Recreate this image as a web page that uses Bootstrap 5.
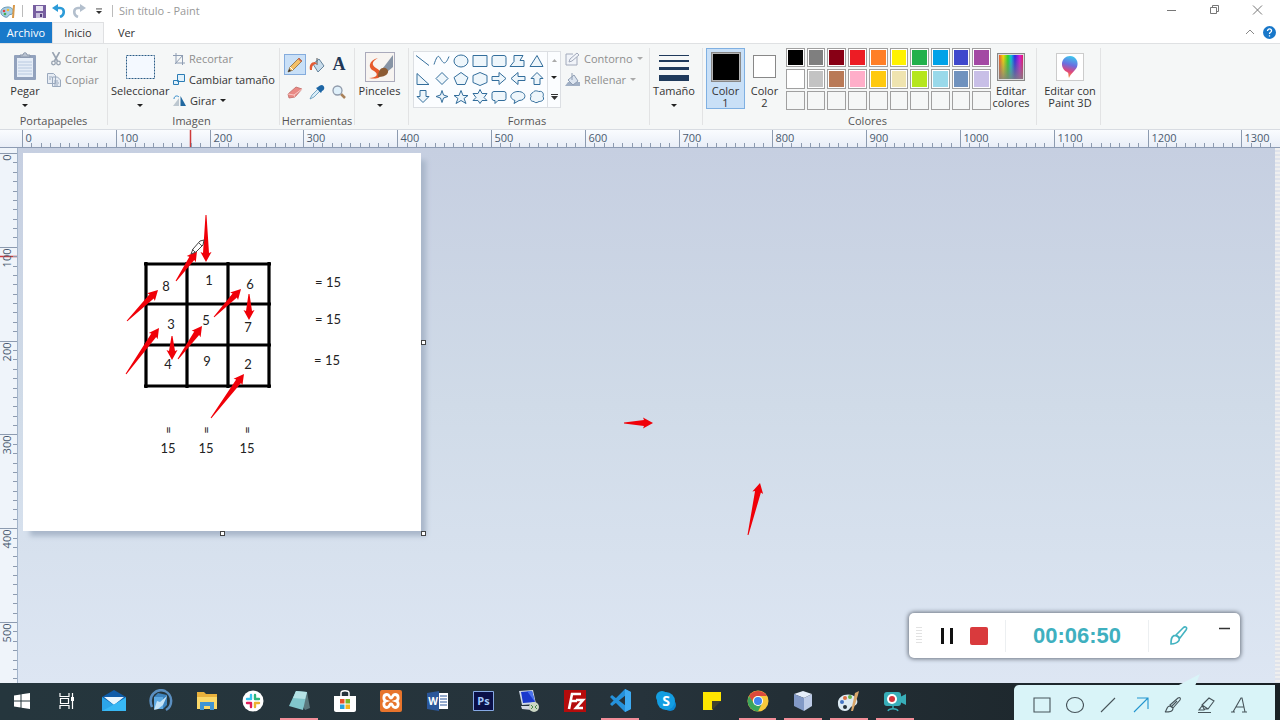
<!DOCTYPE html>
<html lang="es">
<head>
<meta charset="utf-8">
<meta name="viewport" content="width=device-width, initial-scale=1">
<title>Sin título - Paint</title>
<link href="https://cdn.jsdelivr.net/npm/bootstrap@5.3.0/dist/css/bootstrap.min.css" rel="stylesheet">
<style>
body{font-family:"Open Sans","Noto Sans",sans-serif;font-size:11px;line-height:12px;color:#333;background:#fff;}
svg{display:block;flex:none}
button.btn{--bs-btn-font-size:11px;--bs-btn-line-height:12px;--bs-btn-padding-x:0;--bs-btn-padding-y:0;--bs-btn-border-width:0;--bs-btn-border-radius:0;--bs-btn-color:#333}
.titlebar{height:22px;padding-right:15px}
.quick{gap:6px}
.vsep{width:1px;height:12px;background:#bbb}
.doc-title{color:#999}
.win-btns{gap:28px}
.win-btns .line-art{stroke:#777;stroke-width:1}
.tabs-row{height:22px}
.tabs-row .nav-link{padding:0;width:52px;height:22px;line-height:22px;text-align:center;color:#333;font-size:11px;border-radius:0}
.tabs-row .ver-tab{width:45px}
.tabs-row .file-tab{background:#1979ca;color:#fff}
.tabs-row .active{background:#f5f6f7;border:1px solid #dfe0e2;border-bottom:0;line-height:20px}
.ribbon{background:#f5f7f7;border-top:1px solid #dfe1e3;border-bottom:1px solid #d8dce2;height:87px;padding:4px 0;margin-top:-1px}
.group{border-right:1px solid #e2e3e4}
.group-body{height:66px}
.group-name{line-height:14px;text-align:center;color:#555}
.big{width:44px;height:61px}
.big .pic{height:36px;display:flex;align-items:center;justify-content:center}
.big.wide{width:58px}
.row-btn{height:21px;gap:4px}
button.dim.btn{--bs-btn-color:#8e8e8e}
.caret{width:0;height:0;border:3px solid transparent;border-top-color:#222;border-bottom:0}
.dim .caret{border-top-color:#aaa}
.tools{display:grid;grid-template-columns:repeat(3,22px);grid-auto-rows:21px;row-gap:6px;padding:6px 0 0 4px}
.tools .btn,.pal button{display:flex;align-items:center;justify-content:center}
.tools .picked{background:#c9e0f7;outline:1px solid #84acdd;outline-offset:-1px}
.gallery{border:1px solid #dcdfe3;background:#fbfdff;height:57px;margin:3px 0 0 4px}
.shapes{display:grid;grid-template-columns:repeat(7,19px);grid-auto-rows:18px}
.shapes svg{fill:#eef6fb;stroke:#336e9c;stroke-width:1}
.scroller{width:13px;border-left:1px solid #dcdfe3}
.brush-box{width:30px;height:30px;border:1px solid #aab;background:#f7f4f1}
.chosen{background:#c9e0f7;outline:1px solid #7fb0e2;outline-offset:-1px}
.c1{width:30px;height:30px;background:#000;border:1px solid #888;box-shadow:inset 0 0 0 1px #b5b5b5}
.c2{width:23px;height:23px;background:#fff;border:1px solid #888}
.pal{display:grid;grid-template-columns:repeat(10,1fr);grid-template-rows:repeat(3,1fr);gap:2px;width:205px;height:62px;margin-left:2px}
.pal button{border:1px solid #a0a0a0;background:transparent;padding:0}
.pal button span{display:block;width:100%;height:100%;border:1px solid #fff}
.spectrum{width:28px;height:28px;border:1px solid #888;box-shadow:inset 0 0 0 1px #ddd;background:linear-gradient(180deg,rgba(128,128,128,0),rgba(128,128,128,.9)),linear-gradient(90deg,#e33,#fd0 20%,#2d2 38%,#0cd 50%,#22e 65%,#d1d 84%,#e13)}
.p3d{width:28px;height:28px;border:1px solid #ccc;background:#fff}
.ruler-top{height:18px;background:linear-gradient(#fafcff,#e9eef7);border-bottom:1px solid #8d9bb3}
.ruler-left{width:18px;background:#eff4fa;border-right:1px solid #a3b4ca}
.ruler text{font-family:"Open Sans","Noto Sans",sans-serif;font-size:11px;fill:#4b5b70}
.work{background:linear-gradient(#c6cfe1,#d0dbe8 48%,#dde6f3);padding:5px;overflow:hidden}
.edge{width:5px;background:repeating-linear-gradient(#efefef 0 2px,#dfe3ec 2px 4px)}
.sheet{width:398px;height:378px;background:#fff;box-shadow:6px 6px 5px -1px #a9b7ca}
.sheet text{font-family:Lato,"Open Sans",sans-serif;font-size:13px;fill:#222}
.sheet text.turned{font-size:13px}
.knob{width:5px;height:5px;background:#fff;border:1px solid #444}
.kr{left:398px;top:187px}.kb{left:197px;top:378px}.kc{left:398px;top:378px}
.notes{left:0;top:0;width:100%;height:100%;pointer-events:none;fill:#f00008}
.taskbar{height:37px;background:linear-gradient(90deg,#25363d,#26333b 50%,#192125)}
.taskbar .btn{width:46px;height:37px;padding-bottom:2px;display:flex;align-items:center;justify-content:center;position:relative;flex:none}
.taskbar .first{width:44px}
.taskbar .open::after{content:"";position:absolute;left:4px;right:4px;bottom:0;height:2px;background:#f28d98}
.recorder{right:40px;bottom:62px;width:331px;height:45px;background:#fff;border-radius:5px;box-shadow:0 0 4px 1px #6c7480}
.grip{width:6px;height:18px;background:repeating-linear-gradient(#e2e2e2 0 1px,transparent 1px 3px);margin-left:7px}
.clock{font:bold 22px "Liberation Sans",Arial,sans-serif;color:#3fb0bf;width:144px;text-align:center;border:solid #eceff1;border-width:0 1px;line-height:32px}
.inkbar{right:5px;bottom:0;height:35px;width:261px;background:#d9f4f8;border-radius:5px 0 0 0;padding:5px 20px 0 12px}
.inkbar .tip{right:75px;top:-11px}
.inkbar .btn{width:33px;display:flex;justify-content:center;align-items:center}
.inkbar .btn svg,.line-art{fill:none;stroke:#47545a;stroke-width:1.1}
</style>
</head>
<body class="vh-100 d-flex flex-column overflow-hidden position-relative">
<header>
 <div class="titlebar d-flex align-items-center justify-content-between">
  <div class="quick d-flex align-items-center">
   <svg width="16" height="16" viewBox="0 0 16 16"><path d="M1 10C0 6 4 4 8 4c4 0 6 3 5 6-1 2-3 1-4 2s-1 3-4 2c-2-1-4-2-4-4z" fill="#a9cfe4" stroke="#6797b4"/><circle cx="4" cy="8" r="1.3" fill="#d44"/><circle cx="8" cy="7" r="1.3" fill="#eb3"/><circle cx="5" cy="11" r="1.3" fill="#4a5"/><path d="M12 15l1-13h2l-1 13z" fill="#d8994a"/></svg>
   <span class="vsep"></span>
   <button class="btn ms-1" aria-label="Guardar"><svg width="13" height="13" viewBox="0 0 13 13"><path d="M0 0h13v13H0z" fill="#775fa0"/><path d="M3 1h7v5H3z" fill="#e7e3f1"/><path d="M3 8h7v5H3z" fill="#c8bfdc"/><path d="M7 9h2v3H7z" fill="#54407c"/></svg></button>
   <button class="btn" aria-label="Deshacer"><svg width="14" height="14" viewBox="0 0 14 14"><path d="M3 4h5c5 0 5 7 0 9" fill="none" stroke="#2c9bd8" stroke-width="2.6"/><path d="M6 0v8L0 4z" fill="#2c9bd8"/></svg></button>
   <button class="btn" aria-label="Rehacer"><svg width="14" height="14" viewBox="0 0 14 14"><path d="M11 4H6c-5 0-5 7 0 9" fill="none" stroke="#b3bfcd" stroke-width="2.6"/><path d="M8 0v8l6-4z" fill="#b3bfcd"/></svg></button>
   <button class="btn mx-1" aria-label="Personalizar"><svg width="6" height="7" viewBox="0 0 7 7"><path d="M0 .5h7" stroke="#333"/><path d="M0 3h7L3.500 6.500z" fill="#333"/></svg></button>
   <span class="vsep"></span><span class="doc-title">Sin título - Paint</span>
  </div>
  <div class="win-btns d-flex">
   <button class="btn" aria-label="Minimizar"><svg class="line-art" width="15" height="14" viewBox="0 0 15 14"><path d="M3 6.500h9"/></svg></button>
   <button class="btn" aria-label="Restaurar"><svg class="line-art" width="15" height="14" viewBox="0 0 15 14"><path d="M3.500 3.500h6v6h-6zM5.500 3.500v-2h6v6h-2"/></svg></button>
   <button class="btn" aria-label="Cerrar"><svg class="line-art" width="15" height="14" viewBox="0 0 15 14"><path d="M3 1.500l9 9M12 1.500l-9 9"/></svg></button>
  </div>
 </div>
 <div class="tabs-row d-flex justify-content-between">
  <nav class="nav"><a class="nav-link file-tab" href="#">Archivo</a><a class="nav-link active" href="#">Inicio</a><a class="nav-link ver-tab" href="#">Ver</a></nav>
  <div class="d-flex align-items-center gap-2 pe-1">
   <button class="btn" aria-label="Contraer"><svg width="10" height="9" viewBox="0 0 10 9"><path d="M1 5l4-4 4 4" fill="none" stroke="#888"/></svg></button>
   <button class="btn" aria-label="Ayuda"><svg width="13" height="15" viewBox="0 0 13 15"><circle cx="6.500" cy="6.500" r="6.500" fill="#1877c9"/><path d="M4.500 5c0-3 4.300-2.500 4 0-.2 1.400-2 1.300-2 3M6.500 9.200v1.300" fill="none" stroke="#fff" stroke-width="1.300"/></svg></button>
  </div>
 </div>
</header>
<div class="ribbon d-flex">
 <section class="group" style="width:108px">
  <div class="group-body d-flex gap-1" style="padding-left:3px">
   <button class="btn big"><span class="pic"><svg width="24" height="29" viewBox="0 0 24 29"><rect x="1" y="3" width="22" height="25" rx="1" fill="#92a2bd"/><path d="M4 6h16v19H4z" fill="#e5edf7"/><path d="M7 5V3h3c0-3 4-3 4 0h3v2z" fill="#b9c3d1" stroke="#8794a8"/><path d="M5 10h14M5 13h14M5 16h14M5 19h14M5 22h14" stroke="#b8c9e0"/></svg></span><span class="d-block">Pegar</span><span class="caret d-inline-block"></span></button>
   <div>
    <button class="btn row-btn dim d-flex align-items-center"><svg width="10" height="14" viewBox="0 0 10 14"><path d="M1.500 0l5 9M8.500 0l-5 9" stroke="#98a3b1" stroke-width="1.600"/><circle cx="2.500" cy="11" r="1.800" fill="none" stroke="#98a3b1" stroke-width="1.300"/><circle cx="7.500" cy="11" r="1.800" fill="none" stroke="#98a3b1" stroke-width="1.300"/></svg>Cortar</button>
    <button class="btn row-btn dim d-flex align-items-center" style="margin-left:-4px"><svg width="14" height="14" viewBox="0 0 14 14"><path d="M.5.5h6l2 2v8h-8zM5.500 4h5l3 3v6.500h-8z" fill="#e6ecf4" stroke="#9aa9bd"/><path d="M2 4h3M2 6h2M7 8h4M7 10h5M7 12h4" stroke="#9aa9bd"/></svg>Copiar</button>
   </div>
  </div>
  <div class="group-name">Portapapeles</div>
 </section>
 <section class="group" style="width:172px">
  <div class="group-body d-flex gap-1" style="padding-left:3px">
   <button class="btn big wide"><span class="pic"><svg width="29" height="24" viewBox="0 0 29 24"><path d="M.5.5h28v23H.5z" fill="#f4f9ff" stroke="#2b5d87" stroke-dasharray="2 1"/></svg></span><span class="d-block">Seleccionar</span><span class="caret d-inline-block"></span></button>
   <div>
    <button class="btn row-btn dim d-flex align-items-center"><svg width="12" height="12" viewBox="0 0 12 12"><path d="M3 0v10h9M0 2.500h9.500V12M2 11l8-9" fill="none" stroke="#8e9db3"/></svg>Recortar</button>
    <button class="btn row-btn d-flex align-items-center"><svg width="12" height="12" viewBox="0 0 12 12"><path d="M4.500.5h7v7h-7zM.5 6.500h5v4h-5z" fill="#e1f1fb" stroke="#2a7cb5"/></svg>Cambiar tamaño</button>
    <button class="btn row-btn d-flex align-items-center"><svg width="13" height="12" viewBox="0 0 13 12"><path d="M6 3v8H0z" fill="#bcc7d0"/><path d="M7.500 1v10H13z" fill="#2068a0"/><path d="M1 4c0-3 3-4 5-2" fill="none" stroke="#338bca"/></svg>Girar<span class="caret"></span></button>
   </div>
  </div>
  <div class="group-name" style="padding-right:4px">Imagen</div>
 </section>
 <section class="group" style="width:75px">
  <div class="group-body"><div class="tools">
   <button class="btn picked" aria-label="Lápiz"><svg width="16" height="16" viewBox="0 0 16 16"><path d="M1 15l2-5 9-9 3 3-9 9z" fill="#f4c168" stroke="#8a6b3e" stroke-width=".8"/><path d="M11 2l3 3 1-1-3-3z" fill="#cf6457"/><path d="M1 15l1.300-3L4 14z" fill="#333"/><path d="M3 10l3 3" stroke="#fff"/></svg></button>
   <button class="btn" aria-label="Relleno"><svg width="16" height="16" viewBox="0 0 16 16"><path d="M4 7l6-5 5 7-6 6z" fill="#c8dceb" stroke="#64839c"/><path d="M8 8V1" stroke="#555"/><path d="M1 13c-1-5 1-8 5-8l2 2c-4 0-5 2-5 6z" fill="#e35a34"/></svg></button>
   <button class="btn fw-bold" aria-label="Texto" style="font:bold 18px 'Liberation Serif',serif;color:#1f3857">A</button>
   <button class="btn" aria-label="Borrador"><svg width="16" height="14" viewBox="0 0 16 14"><path d="M1 9l8-7 6 2-7 8-6 1z" fill="#e98984" stroke="#bf6a66" stroke-width=".8"/><path d="M1 9l6 1 8-6M7 10l1 2" stroke="#f9c9c5" fill="none"/></svg></button>
   <button class="btn" aria-label="Selector de color"><svg width="16" height="16" viewBox="0 0 16 16"><path d="M1 15l2-4 6-6 2 2-6 6z" fill="#d9edf8" stroke="#5b93b6" stroke-width=".8"/><path d="M7 4l5 5 1-2c3-1 3-5 0-6-2 0-3 1-4 2z" fill="#1d66a5"/></svg></button>
   <button class="btn" aria-label="Lupa"><svg width="16" height="16" viewBox="0 0 16 16"><path d="M10 10l4 4" stroke="#a9825a" stroke-width="2.500"/><circle cx="6.500" cy="6.500" r="4.500" fill="#dff0fa" stroke="#8f9aaa" stroke-width="1.300"/></svg></button>
  </div></div>
  <div class="group-name">Herramientas</div>
 </section>
 <section class="group" style="width:54px">
  <div class="group-body d-flex justify-content-center pe-1"><button class="btn big"><span class="pic"><svg class="brush-box" viewBox="0 0 28 28"><path d="M12 5C3 7 1 15 8 18c5 3 3 7-5 7 14 3 15-6 7-10-5-3-4-7 2-10z" fill="#e75a2b"/><path d="M17 15L27 2v12l-6 5z" fill="#8794a5"/><path d="M12 24c0-8 5-11 9-8 3 3 0 8-9 8z" fill="#8d5b33"/></svg></span><span class="d-block text-nowrap">Pinceles</span><span class="caret d-inline-block"></span></button></div>
 </section>
 <section class="group" style="width:241px">
  <div class="group-body d-flex gap-1">
   <div class="gallery d-flex"><div class="shapes" id="shapes"></div>
    <div class="scroller d-flex flex-column align-items-center justify-content-around"><svg width="5" height="3"><path d="M0 3h5L2.500 0z" fill="#aaa"/></svg><span class="caret"></span><svg width="7" height="6"><path d="M0 .5h7" stroke="#333"/><path d="M0 2h7L3.500 6z" fill="#333"/></svg></div></div>
   <div>
    <button class="btn row-btn dim d-flex align-items-center"><svg width="15" height="14" viewBox="0 0 15 14"><path d="M12 5v8H1V2h7M4 10l1-3 7-6 2 2-7 6z" fill="#f1f4f9" stroke="#a2aabb"/></svg>Contorno<span class="caret"></span></button>
    <button class="btn row-btn dim d-flex align-items-center"><svg width="15" height="14" viewBox="0 0 15 14"><path d="M0 13l3-4h12v4z" fill="#a1b0c5"/><path d="M3 7l6-5 4 6-5 4z" fill="#dce5f0" stroke="#8e9db2"/><path d="M7 7V0" stroke="#8e9db2"/></svg>Rellenar<span class="caret"></span></button>
   </div>
  </div>
  <div class="group-name pe-1">Formas</div>
 </section>
 <section class="group" style="width:53px">
  <div class="group-body d-flex"><button class="btn big" style="margin-left:2px"><span class="pic"><svg width="30" height="28" viewBox="0 0 30 28"><path d="M0 2h30v1H0zM0 7h30v2H0zM0 14h30v3H0zM0 22h30v6H0z" fill="#1f3a5c"/></svg></span><span class="d-block text-nowrap">Tamaño</span><span class="caret d-inline-block"></span></button></div>
 </section>
 <section class="group" style="width:334px">
  <div class="group-body d-flex" style="padding-left:3px">
   <button class="btn big chosen" style="width:39px"><span class="pic"><span class="c1"></span></span>Color<br>1</button>
   <button class="btn big" style="width:39px"><span class="pic"><span class="c2"></span></span>Color<br>2</button>
   <div class="pal" id="pal"></div>
   <button class="btn big" style="width:40px"><span class="pic"><span class="spectrum"></span></span>Editar<br>colores</button>
  </div>
  <div class="group-name pe-1">Colores</div>
 </section>
 <section class="group" style="width:64px">
  <div class="group-body d-flex ps-1"><button class="btn big wide"><span class="pic"><svg class="p3d" viewBox="0 0 26 26"><defs><linearGradient id="pg" x1=".6" y1="0" x2=".4" y2="1"><stop offset="0" stop-color="#3cc8ee"/><stop offset=".4" stop-color="#6a6fe0"/><stop offset=".7" stop-color="#e0467c"/><stop offset="1" stop-color="#f5a03c"/></linearGradient></defs><path d="M13 2c6 0 9 6 7 11-2 4-6 6-8 11-1-4 0-5-2-6-8-4-6-16 3-16z" fill="url(#pg)"/></svg></span><span class="text-nowrap">Editar con</span><br>Paint 3D</button></div>
 </section>
</div>
<div class="ruler ruler-top"><svg id="rulerX" width="100%" height="17"></svg></div>
<main class="d-flex flex-grow-1" style="min-height:0">
 <div class="ruler ruler-left overflow-hidden"><svg id="rulerY" width="17" height="100%"></svg></div>
 <div class="work flex-grow-1 position-relative">
  <div class="sheet position-relative">
   <svg width="398" height="378" viewBox="23 153 398 378">
    <path d="M146 262v126M187 262v126M228 262v126M269 262v126M144 264h127M144 304h127M144 345h127M144 386h127" stroke="#000" stroke-width="3.200"/>
    <g id="digits" text-anchor="middle"></g>
   </svg>
   <span class="knob kr position-absolute"></span><span class="knob kb position-absolute"></span><span class="knob kc position-absolute"></span>
  </div>
  <svg class="notes position-absolute"><g id="arrows" transform="translate(-18 -148)"></g><g transform="translate(-18 -148)"><path d="M191 254l2-5 7-8 4-1-1 5-7 7z" fill="#fff" stroke="#444"/><path d="M192 249l3 3M199 243l3 3" stroke="#555" fill="none"/></g></svg>
 </div>
 <div class="edge"></div>
</main>
<footer class="taskbar d-flex">
 <button class="btn first" aria-label="Inicio"><svg width="16" height="16" viewBox="0 0 16 16"><path d="M0 2.500l6.500-1v6H0zM7.500 1.300L16 0v7.500H7.500zM0 8.500h6.500v6L0 13.600zM7.500 8.500H16V16l-8.500-1.300z" fill="#fff"/></svg></button>
 <button class="btn" aria-label="Vista de tareas"><svg width="16" height="16" viewBox="0 0 16 16"><path d="M1 0v3.500h9V0M1 16v-3.500h9V16M1.500 5.500h8v5h-8zM13.500 0v16" fill="none" stroke="#fff" stroke-width="1.200"/><path d="M12 4h3v4h-3z" fill="#fff"/></svg></button>
 <button class="btn" style="width:48px" aria-label="Correo"><svg width="24" height="22" viewBox="0 0 24 22"><path d="M0 7l12-7 12 7v14H0z" fill="#0f5ca8"/><path d="M2 7h20l-10 8z" fill="#e9f6fd"/><path d="M0 7l12 8 12-8v14H0z" fill="#2ca5e8"/><path d="M0 21L24 8v13z" fill="#38b8f4"/></svg></button>
 <button class="btn" aria-label="Base de datos"><svg width="24" height="24" viewBox="0 0 24 24"><path d="M3 18C-2 6 8-1 16 2c8 4 8 15 1 19" fill="none" stroke="#5b8fc0" stroke-width="2.500"/><path d="M5 8l4-4 9 2v10l-4 4H5z" fill="#3d83bd"/><path d="M5 8h9v12H5z" fill="#5da9e2"/><path d="M5 21l3-9 3 1 7-6-4 9-5 4z" fill="#c5e3f6"/></svg></button>
 <button class="btn" aria-label="Explorador"><svg width="22" height="20" viewBox="0 0 22 20"><path d="M1 1h7l2 2h11v15H1z" fill="#e9b13c"/><path d="M1 6h20v12H1z" fill="#fbd869"/><path d="M4 19v-8h14v8h-4v-4H8v4z" fill="#3f94d4"/></svg></button>
 <button class="btn" aria-label="Slack"><svg width="22" height="22" viewBox="0 0 22 22"><circle cx="11" cy="11" r="10.500" fill="#fff"/><g stroke-width="2.400" stroke-linecap="round"><path d="M9 5v4M5 9h4" stroke="#36c5f0"/><path d="M13 5v4M13 9h4" stroke="#2eb67d"/><path d="M13 13v4M13 13h4" stroke="#ecb22e"/><path d="M9 13v4M5 13h4" stroke="#e01e5a"/></g></svg></button>
 <button class="btn open" aria-label="Bloc de notas"><svg width="22" height="22" viewBox="0 0 22 22"><path d="M7 2h12l3 16-5 2z" fill="#5b777c"/><path d="M8 1l11 1-4 18-14-4z" fill="#81c6cc"/><path d="M8 1l11 1-2 7-12-1z" fill="#b5e2e5"/></svg></button>
 <button class="btn" aria-label="Tienda"><svg width="22" height="22" viewBox="0 0 22 22"><path d="M7 6V3c0-3 8-3 8 0v3" fill="none" stroke="#fff" stroke-width="1.500"/><path d="M0 6h22v14c0 1-1 2-2 2H2c-1 0-2-1-2-2z" fill="#fff"/><path d="M6 9h4.500v4.500H6z" fill="#e8502b"/><path d="M11.500 9H16v4.500h-4.500z" fill="#7db526"/><path d="M6 14.500h4.500V19H6z" fill="#2ba1dc"/><path d="M11.500 14.500H16V19h-4.500z" fill="#f6b51d"/></svg></button>
 <button class="btn" aria-label="XAMPP"><svg width="22" height="22" viewBox="0 0 22 22"><rect width="22" height="22" rx="2" fill="#e7742c"/><path d="M7 4.500c-4 0-4 5.500-1 6.500-3 1-3 6.500 1 6.500 3 0 2-3.500 4-3.500s1 3.500 4 3.500c4 0 4-5.500 1-6.500 3-1 3-6.500-1-6.500-3 0-2 3.500-4 3.500s-1-3.500-4-3.500z" fill="none" stroke="#fff" stroke-width="2.800"/></svg></button>
 <button class="btn" aria-label="Word"><svg width="21" height="20" viewBox="0 0 21 20"><path d="M11 2h10v16H11z" fill="#fff"/><path d="M13 5h7M13 8h7M13 11h7M13 14h7" stroke="#2b579a"/><path d="M0 2l12-2v20L0 18z" fill="#2b579a"/><text x="6" y="14" font-size="10" font-weight="bold" text-anchor="middle" fill="#fff">W</text></svg></button>
 <button class="btn" aria-label="Photoshop"><svg width="21" height="20" viewBox="0 0 21 20"><path d="M.5.5h20v19H.5z" fill="#0b1048" stroke="#86a9e4"/><text x="10.500" y="14" font-size="11" text-anchor="middle" fill="#a4c8fa" font-weight="bold">Ps</text></svg></button>
 <button class="btn" aria-label="Escritorio remoto"><svg width="22" height="22" viewBox="0 0 22 22"><path d="M1 1l14-1 3 14-14 1z" fill="#cfd8e7"/><path d="M3 2l11-1 3 11-12 1z" fill="#1b39cc"/><path d="M9 1l5 0 3 11z" fill="#4c73ec"/><path d="M3 16h11v4l-10-1z" fill="#d5d9e3"/><circle cx="16" cy="17" r="5" fill="#cbd6c4"/><path d="M13 15l2 2-2 2M19 15l-2 2 2 2" stroke="#49884a" fill="none"/></svg></button>
 <button class="btn" style="width:45px" aria-label="FileZilla"><svg width="22" height="22" viewBox="0 0 22 22"><path d="M0 0h22v22H0z" fill="#b50c0c"/><path d="M5 19L8 4h9M6 11h7M12 10h7l-7 8h7" fill="none" stroke="#fff" stroke-width="2.600"/></svg></button>
 <button class="btn open" aria-label="Visual Studio Code"><svg width="23" height="23" viewBox="0 0 23 23"><path d="M1 8l2-2 14 11V6L3 17l-2-2L16 0l6 3v17l-6 3z" fill="#2592dc"/><path d="M16 0l6 3v17l-6 3z" fill="#3eabf2"/></svg></button>
 <button class="btn" aria-label="Skype"><svg width="22" height="22" viewBox="0 0 22 22"><circle cx="7" cy="7" r="6" fill="#159fdf"/><circle cx="15" cy="15" r="6" fill="#0d87d2"/><circle cx="11" cy="11" r="9" fill="#139de2"/><text x="11" y="16" font-size="14" font-weight="bold" text-anchor="middle" fill="#fff">S</text></svg></button>
 <button class="btn" aria-label="Notas rápidas"><svg width="18" height="18" viewBox="0 0 18 18"><path d="M0 0h18v9h-8v9H0z" fill="#ffe600"/><path d="M9 18V9h9z" fill="#40422d"/></svg></button>
 <button class="btn open" style="width:45px" aria-label="Chrome"><svg width="22" height="22" viewBox="0 0 22 22"><circle cx="11" cy="11" r="10.500" fill="#f8c93c"/><path d="M2 6a10.500 10.500 0 0 1 18 0h-9a5 5 0 0 0-5 7z" fill="#dc4a3d"/><path d="M2 6a10.500 10.500 0 0 0 9 15.500l4-8a5 5 0 0 1-8 0z" fill="#3ba55c"/><circle cx="11" cy="11" r="5" fill="#fff"/><circle cx="11" cy="11" r="4" fill="#4286ef"/></svg></button>
 <button class="btn open" aria-label="VirtualBox"><svg width="20" height="22" viewBox="0 0 20 22"><path d="M1 4l9-3 9 3-8 4z" fill="#e5edf9"/><path d="M1 4l10 4v13L1 16z" fill="#8299c6"/><path d="M19 4l-8 4v13l8-5z" fill="#bdcbe7"/></svg></button>
 <button class="btn open" aria-label="Paint"><svg width="24" height="22" viewBox="0 0 24 22"><path d="M1 14C0 6 9 3 15 5c8 4 6 11 1 11-3 0-3 5-8 5-4 0-7-3-7-7z" fill="#dceaf3"/><circle cx="5" cy="12" r="2" fill="#4575c5"/><circle cx="8" cy="8" r="2" fill="#dc7044"/><circle cx="13" cy="7" r="2" fill="#67b24a"/><circle cx="8" cy="17" r="2" fill="#26333b"/><path d="M14 21l4-18 4-2-1 4-5 16z" fill="#d9a66b"/></svg></button>
 <button class="btn open" aria-label="Grabadora"><svg width="24" height="22" viewBox="0 0 24 22"><rect x="1" y="2" width="17" height="14" rx="3" fill="#38aeb9"/><path d="M17 7l6-3v11l-6-3z" fill="#38aeb9"/><circle cx="9" cy="9" r="5" fill="#fff"/><circle cx="9" cy="9" r="3" fill="#d3343b"/><path d="M10 15v3M5 21c1-3 9-3 10 0" stroke="#38aeb9" stroke-width="1.500" fill="none"/></svg></button>
</footer>
<div class="recorder position-absolute d-flex align-items-center">
 <span class="grip"></span>
 <button class="btn" style="margin-left:19px" aria-label="Pausa"><svg width="12" height="16"><path d="M0 0h3v16H0zM9 0h3v16H9z" fill="#111"/></svg></button>
 <button class="btn" style="margin:0 17px" aria-label="Detener"><svg width="18" height="18"><rect width="18" height="18" rx="2" fill="#d93a3d"/></svg></button>
 <span class="clock">00:06:50</span>
 <button class="btn" style="margin-left:20px" aria-label="Dibujar"><svg width="20" height="20" viewBox="0 0 20 20" fill="none" stroke="#43b3c1" stroke-width="1.600"><path d="M7 9l7-7c2-2 5-1 3 2l-6 8zM7 9l4 3M2 18c0-4 0-7 3-8.500 3 0 6 2 5 5C8 17 6 18 2 18z"/></svg></button>
 <button class="btn align-self-start" style="margin:10px 0 0 30px" aria-label="Minimizar grabadora"><svg width="11" height="11"><path d="M0 5.500h11" stroke="#333" stroke-width="1.500"/></svg></button>
</div>
<div class="inkbar position-absolute d-flex">
 <svg class="tip position-absolute" width="23" height="12" viewBox="0 0 23 12"><path d="M0 12L23 0l-5 12z" fill="#d9f4f8"/></svg>
 <button class="btn" aria-label="Rectángulo"><svg width="18" height="18" viewBox="0 0 18 18"><path d="M1 2h16v14H1z"/></svg></button>
 <button class="btn" aria-label="Elipse"><svg width="18" height="18" viewBox="0 0 18 18"><ellipse cx="9" cy="9" rx="8.500" ry="7.500"/></svg></button>
 <button class="btn" aria-label="Línea"><svg width="18" height="18" viewBox="0 0 18 18"><path d="M2 16L16 2"/></svg></button>
 <button class="btn" aria-label="Flecha"><svg width="18" height="18" viewBox="0 0 18 18"><path d="M2 16L16 2M5 2h11v11" style="stroke:#2295cf"/></svg></button>
 <button class="btn" aria-label="Pincel"><svg width="18" height="18" viewBox="0 0 18 18"><path d="M6 9l8-7c2-1 3 0 2 2l-7 8zM6 9l3 3M1 16c2-1 1-6 5-6l3 2c0 4-4 4-8 4zM8 10l5-5"/></svg></button>
 <button class="btn" aria-label="Resaltador"><svg width="18" height="18" viewBox="0 0 18 18"><path d="M5 9l7-7 5 3-6 8H7zM5 9l6 4M5 10l-3 4h5l1-1M1 16.500h13"/></svg></button>
 <button class="btn" aria-label="Texto"><svg width="18" height="18" viewBox="0 0 18 18"><path d="M3 16L11 2h1l3 14M1 16h4M12 16h5M6 11h8"/></svg></button>
</div>
<script>
const el=id=>document.getElementById(id);
/* rulers: a labelled mark each 100 units, ten small divisions between */
const unit=0.938;let hx='<path d="M190.500 0v17" stroke="#cf3b3b" stroke-width="1.500"/>',vy='<path d="M0 108.500h17" stroke="#cf3b3b" stroke-width="1.500"/>';
for(let v=0;v<1340;v+=10){
 const big=v%100===0,x=Math.round(22+v*unit)+.5,y=Math.round(5+v*unit)+.5;
 hx+=`<path d="M${x} ${big?0:13}V17" stroke="#8d9bb0"/>`;
 if(y<700)vy+=`<path d="M${big?0:13} ${y}H17" stroke="#8d9bb0"/>`;
 if(big){hx+=`<text x="${x+3}" y="12">${v}</text>`;
  if(y<500)vy+=`<text text-anchor="end" transform="translate(11 ${y+1}) rotate(-90)">${v}</text>`;}
}
el('rulerX').innerHTML=hx;el('rulerY').innerHTML=vy;
const shapes=['M2 3l13 10','M1 12C5 0 6 4 8 7s4 7 8-3','C','M2 3h14v11H2z','R','M5 3h9l-3 5h4v6H1l4-5z','M9 3l6 11H2z',
'M3 3v11h12z','M9 2l6 6-6 6-6-6z','M9 2l7 5-3 7H5L2 7z','M9 2l7 3v7l-7 3-7-3V5z','M2 6h7V2l7 6-7 6v-4H2z','M16 6H9V2L2 8l7 6v-4h7z','M6 14V8H3l6-6 6 6h-3v6z',
'M6 2v6H3l6 6 6-6h-3V2z','M9 2l1.500 4.500L15 8l-4.500 1.500L9 14l-1.500-4.500L3 8l4.500-1.500z','M9 2l2 5h5l-4 3 2 5-5-3-5 3 2-5-4-3h5z','M9 1l2 4h5l-3 4 3 3h-5l-2 3-2-3H2l3-3-3-4h5z','M4 3h10q2 0 2 2v5q0 2-2 2H8l-3 3v-3H4q-2 0-2-2V5q0-2 2-2z','M6 12C-2 9 3 3 9 3c9 0 9 9 1 9l-5 3z','M5 4c2-3 5-1 6-1 4-1 5 3 4 5 2 4-2 5-4 5-3 2-4 1-5 0-4 0-4-3-3-5-1-2 0-3 2-4z'];
el('shapes').innerHTML=shapes.map(d=>'<svg width="18" height="18" viewBox="0 0 18 17">'+(d==='C'?'<ellipse cx="9" cy="8.500" rx="7" ry="6"/>':d==='R'?'<rect x="2" y="3" width="14" height="11" rx="2"/>':`<path d="${d}"/>`)+'</svg>').join('');
el('shapes').querySelectorAll('svg')[1].style.fill='none';
const colors='#000 #7f7f7f #880015 #ed1c24 #ff7f27 #fff200 #22b14c #00a2e8 #3f48cc #a349a4 #fff #c3c3c3 #b97a57 #ffaec9 #ffc90e #efe4b0 #b5e61d #99d9ea #7092be #c8bfe7'.split(' ');
for(let i=0;i<30;i++)el('pal').innerHTML+=`<button aria-label="Color ${i+1}">${colors[i]?`<span style="background:${colors[i]}"></span>`:''}</button>`;
el('digits').innerHTML=[[8,166,287],[1,209,281],[6,250,285],[3,171,325],[5,206,321],[7,248,328],[4,168,365],[9,207,362],[2,248,365],['= 15',328,283],['= 15',328,320],['= 15',327,361],[15,168,449],[15,206,449],[15,247,449]].map(([t,x,y])=>`<text x="${x}" y="${y+4}">${t}</text>`).join('')+[168,206,247].map(x=>`<text class="turned" transform="translate(${x-4} 430) rotate(90)">=</text>`).join('');
/* tapered arrows: tail x,y then tip x,y */
el('arrows').innerHTML=[[206,215,206,262],[176,281,197,251],[127,321,158,290],[214,317,241,289],[249,294,249,320],[126,374,159,328],[172,336,172,360],[178,359,202,326],[211,418,244,374],[624,423,653,423],[748,535,760,483]].map(([a,b,c,d])=>{
 const L=Math.hypot(c-a,d-b),r=Math.atan2(d-b,c-a)*180/Math.PI;
 return `<path transform="translate(${a} ${b}) rotate(${r})" d="M0-.5L${L-9}-3l-1-2.500L${L} 0l${-10} 5.500 1-2.500L0 .5z"/>`}).join('');
</script>
<script src="https://cdn.jsdelivr.net/npm/bootstrap@5.3.0/dist/js/bootstrap.bundle.min.js"></script>
</body>
</html>
